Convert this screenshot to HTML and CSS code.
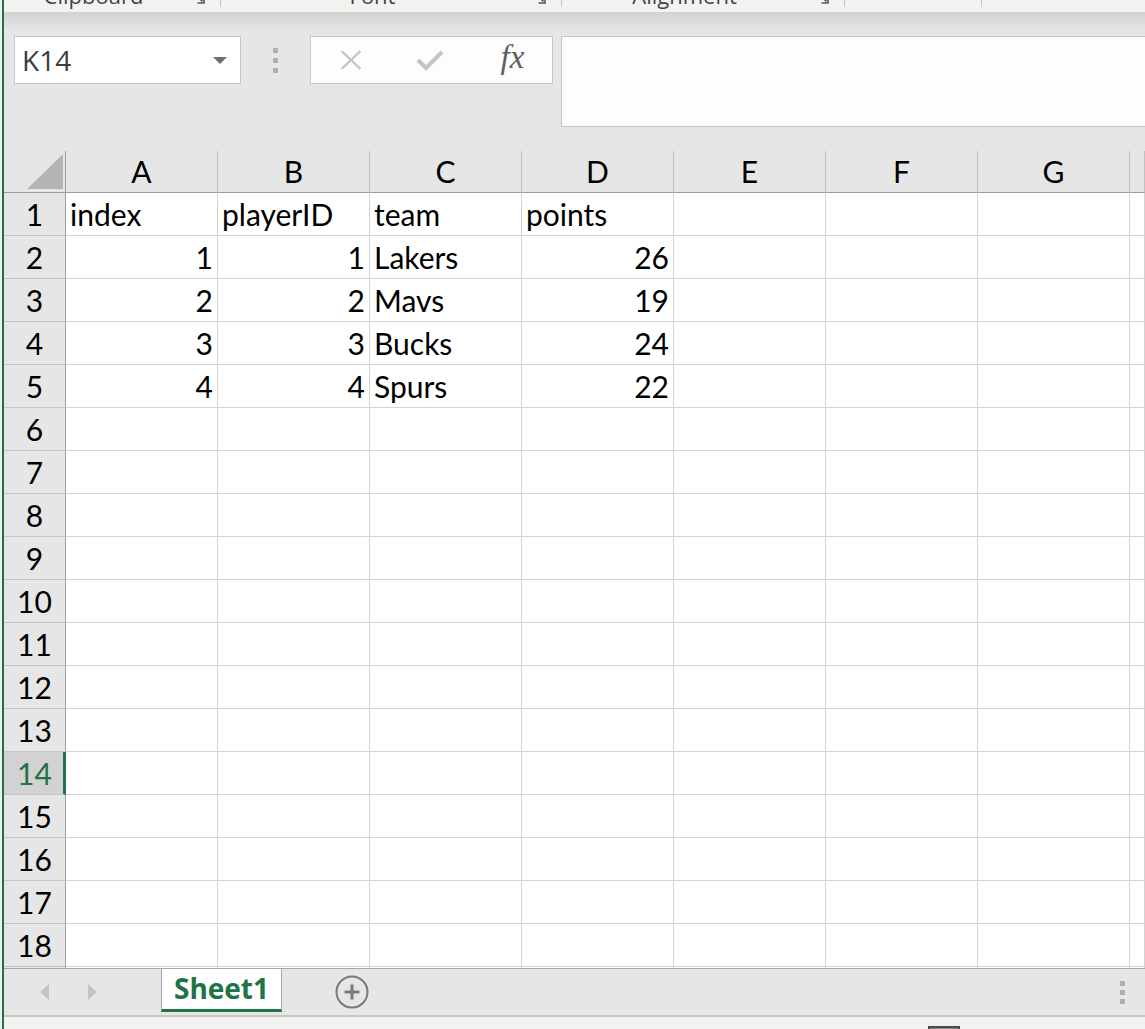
FILE: index.html
```html
<!DOCTYPE html>
<html lang="en">
<head>
<meta charset="utf-8">
<title>Excel - Sheet1</title>
<link rel="stylesheet" href="styles.css">
</head>
<body>
<div class="app">
  <div class="edge"></div>
  <div class="main">
    <div class="ribbon">
      <div class="rrow">
        <div class="rgroup g-clip"><span class="rlabel">Clipboard</span><span class="launch"><svg width="12" height="12" viewBox="0 0 12 12"><path d="M1 1 L8.5 8.5 M3.5 10 H10 V3.5" fill="none" stroke="#555" stroke-width="1.6"/></svg></span></div>
        <div class="rgroup g-font"><span class="rlabel">Font</span><span class="launch"><svg width="12" height="12" viewBox="0 0 12 12"><path d="M1 1 L8.5 8.5 M3.5 10 H10 V3.5" fill="none" stroke="#555" stroke-width="1.6"/></svg></span></div>
        <div class="rgroup g-align"><span class="rlabel">Alignment</span><span class="launch"><svg width="12" height="12" viewBox="0 0 12 12"><path d="M1 1 L8.5 8.5 M3.5 10 H10 V3.5" fill="none" stroke="#555" stroke-width="1.6"/></svg></span></div>
        <div class="rgroup g-num"></div>
      </div>
    </div>

    <div class="fbar">
      <div class="namebox"><span class="nb-text">K14</span><span class="nb-caret"></span></div>
      <div class="grip"><i></i><i></i><i></i></div>
      <div class="fbtns">
        <span class="fb"><svg width="22" height="20" viewBox="0 0 22 20"><path d="M1.5 1 L20.5 19 M20.5 1 L1.5 19" stroke="#c4c4c4" stroke-width="2.4" fill="none"/></svg></span>
        <span class="fb"><svg width="28" height="22" viewBox="0 0 28 22"><path d="M2 11 L10 19 L26 3" stroke="#c4c4c4" stroke-width="4.2" fill="none"/></svg></span>
        <span class="fb fx">fx</span>
      </div>
      <div class="finput"></div>
    </div>

    <div class="sheet">
      <div class="row head">
        <div class="corner"><svg width="36" height="35" viewBox="0 0 36 35"><path d="M0 35 L36 0 L36 35 Z" fill="#b4b4b4"/></svg></div>
        <div class="ch">A</div><div class="ch">B</div><div class="ch">C</div><div class="ch">D</div><div class="ch">E</div><div class="ch">F</div><div class="ch">G</div><div class="ch"></div>
      </div>
      <div class="row"><div class="rh">1</div><div class="c">index</div><div class="c">playerID</div><div class="c">team</div><div class="c">points</div><div class="c"></div><div class="c"></div><div class="c"></div><div class="c"></div></div>
      <div class="row"><div class="rh">2</div><div class="c n">1</div><div class="c n">1</div><div class="c">Lakers</div><div class="c n">26</div><div class="c"></div><div class="c"></div><div class="c"></div><div class="c"></div></div>
      <div class="row"><div class="rh">3</div><div class="c n">2</div><div class="c n">2</div><div class="c">Mavs</div><div class="c n">19</div><div class="c"></div><div class="c"></div><div class="c"></div><div class="c"></div></div>
      <div class="row"><div class="rh">4</div><div class="c n">3</div><div class="c n">3</div><div class="c">Bucks</div><div class="c n">24</div><div class="c"></div><div class="c"></div><div class="c"></div><div class="c"></div></div>
      <div class="row"><div class="rh">5</div><div class="c n">4</div><div class="c n">4</div><div class="c">Spurs</div><div class="c n">22</div><div class="c"></div><div class="c"></div><div class="c"></div><div class="c"></div></div>
      <div class="row"><div class="rh">6</div><div class="c"></div><div class="c"></div><div class="c"></div><div class="c"></div><div class="c"></div><div class="c"></div><div class="c"></div><div class="c"></div></div>
      <div class="row"><div class="rh">7</div><div class="c"></div><div class="c"></div><div class="c"></div><div class="c"></div><div class="c"></div><div class="c"></div><div class="c"></div><div class="c"></div></div>
      <div class="row"><div class="rh">8</div><div class="c"></div><div class="c"></div><div class="c"></div><div class="c"></div><div class="c"></div><div class="c"></div><div class="c"></div><div class="c"></div></div>
      <div class="row"><div class="rh">9</div><div class="c"></div><div class="c"></div><div class="c"></div><div class="c"></div><div class="c"></div><div class="c"></div><div class="c"></div><div class="c"></div></div>
      <div class="row"><div class="rh">10</div><div class="c"></div><div class="c"></div><div class="c"></div><div class="c"></div><div class="c"></div><div class="c"></div><div class="c"></div><div class="c"></div></div>
      <div class="row"><div class="rh">11</div><div class="c"></div><div class="c"></div><div class="c"></div><div class="c"></div><div class="c"></div><div class="c"></div><div class="c"></div><div class="c"></div></div>
      <div class="row"><div class="rh">12</div><div class="c"></div><div class="c"></div><div class="c"></div><div class="c"></div><div class="c"></div><div class="c"></div><div class="c"></div><div class="c"></div></div>
      <div class="row"><div class="rh">13</div><div class="c"></div><div class="c"></div><div class="c"></div><div class="c"></div><div class="c"></div><div class="c"></div><div class="c"></div><div class="c"></div></div>
      <div class="row"><div class="rh sel">14</div><div class="c"></div><div class="c"></div><div class="c"></div><div class="c"></div><div class="c"></div><div class="c"></div><div class="c"></div><div class="c"></div></div>
      <div class="row"><div class="rh">15</div><div class="c"></div><div class="c"></div><div class="c"></div><div class="c"></div><div class="c"></div><div class="c"></div><div class="c"></div><div class="c"></div></div>
      <div class="row"><div class="rh">16</div><div class="c"></div><div class="c"></div><div class="c"></div><div class="c"></div><div class="c"></div><div class="c"></div><div class="c"></div><div class="c"></div></div>
      <div class="row"><div class="rh">17</div><div class="c"></div><div class="c"></div><div class="c"></div><div class="c"></div><div class="c"></div><div class="c"></div><div class="c"></div><div class="c"></div></div>
      <div class="row"><div class="rh">18</div><div class="c"></div><div class="c"></div><div class="c"></div><div class="c"></div><div class="c"></div><div class="c"></div><div class="c"></div><div class="c"></div></div>
      <div class="row"><div class="rh">19</div><div class="c"></div><div class="c"></div><div class="c"></div><div class="c"></div><div class="c"></div><div class="c"></div><div class="c"></div><div class="c"></div></div>
    </div>

    <div class="tabs">
      <div class="nav">
        <span class="arr arr-l"></span>
        <span class="arr arr-r"></span>
      </div>
      <div class="tab">Sheet1</div>
      <div class="addsheet"><svg width="34" height="34" viewBox="0 0 34 34"><circle cx="17" cy="17" r="15.5" fill="none" stroke="#7a7a7a" stroke-width="2"/><path d="M17 9.5 V24.5 M9.5 17 H24.5" stroke="#7a7a7a" stroke-width="3"/></svg></div>
      <div class="vdots"><i></i><i></i><i></i></div>
    </div>

    <div class="status"><span class="sbox"></span></div>
  </div>
</div>
</body>
</html>
```

FILE: styles.css
```css
html, body {
  margin: 0;
  padding: 0;
}
body {
  width: 1145px;
  height: 1029px;
  overflow: hidden;
  background: #e6e6e6;
  font-family: "Open Sans", "Noto Sans", sans-serif;
}
.app {
  display: flex;
  height: 1029px;
}
.edge {
  width: 4px;
  flex: none;
  background: linear-gradient(90deg, #efefef 0, #efefef 2px, #217346 2px, #217346 4px);
}
.main {
  flex: 1;
  display: flex;
  flex-direction: column;
  min-width: 0;
}

/* Ribbon (cut off at the top of the window) */
.ribbon {
  height: 12px;
  flex: none;
  background: #f3f2f1;
  overflow: hidden;
}
.rrow {
  display: flex;
  margin-top: -16px;
}
.rgroup {
  display: flex;
  height: 23px;
  box-sizing: border-box;
  border-right: 1px solid #c8c6c4;
}
.g-clip { width: 217px; }
.g-font { width: 341px; }
.g-align { width: 283px; }
.g-num { width: 137px; }
.rlabel {
  flex: 1;
  text-align: center;
  font-size: 22px;
  line-height: 22px;
  color: #444;
}
.launch {
  width: 37px;
  flex: none;
  padding-left: 11px;
  box-sizing: border-box;
  padding-top: 9px;
}
.launch svg { display: block; }

/* Formula bar */
.fbar {
  height: 139px;
  flex: none;
  box-sizing: border-box;
  padding: 24px 0 0 10px;
  display: flex;
  align-items: flex-start;
  background: linear-gradient(#d2d2d2 0, #e6e6e6 18px, #e6e6e6 100%);
}
.namebox {
  width: 227px;
  height: 48px;
  box-sizing: border-box;
  border: 1px solid #c6c6c6;
  background: #fff;
  display: flex;
  align-items: center;
  justify-content: space-between;
  padding: 0 13px 0 7px;
}
.nb-text {
  font-size: 28px;
  line-height: 1;
  color: #3c3c3c;
}
.nb-caret {
  width: 0;
  height: 0;
  border-left: 7px solid transparent;
  border-right: 7px solid transparent;
  border-top: 7px solid #6f6f6f;
}
.grip {
  width: 69px;
  height: 48px;
  display: flex;
  flex-direction: column;
  align-items: center;
  justify-content: center;
  gap: 5px;
}
.grip i, .vdots i {
  display: block;
  width: 5px;
  height: 5px;
  background: #b0b0b0;
}
.fbtns {
  width: 243px;
  height: 48px;
  box-sizing: border-box;
  border: 1px solid #c6c6c6;
  background: #fdfdfd;
  display: flex;
}
.fb {
  flex: 1;
  display: flex;
  align-items: center;
  justify-content: center;
}
.fb svg { display: block; }
.fx {
  font-family: "Liberation Serif", "DejaVu Serif", serif;
  font-style: italic;
  font-size: 33px;
  color: #5f5f5f;
  padding-bottom: 6px;
  padding-left: 4px;
}
.finput {
  flex: 1;
  height: 91px;
  margin-left: 8px;
  box-sizing: border-box;
  border: 1px solid #c6c6c6;
  border-right: none;
  background: #fdfdfd;
}

/* Sheet grid */
.sheet {
  height: 817px;
  flex: none;
  overflow: hidden;
  background: #fff;
}
.row {
  display: grid;
  grid-template-columns: 62px repeat(7, 152px) 1fr;
  height: 43px;
}
.row.head { height: 42px; }
.row > div {
  box-sizing: border-box;
  display: flex;
  align-items: flex-end;
  font-family: "Lato", "Carlito", sans-serif;
  font-size: 30px;
  line-height: 1;
  color: #000;
  padding: 0 4px 6px;
  white-space: nowrap;
  overflow: hidden;
}
.c {
  border-right: 1px solid #d4d4d4;
  border-bottom: 1px solid #d4d4d4;
  background: #fff;
}
.c.n { justify-content: flex-end; }
.ch {
  background: #e6e6e6;
  border-right: 1px solid #c0c0c0;
  border-bottom: 1px solid #9e9e9e;
  justify-content: center;
}
.row > .corner {
  background: #e6e6e6;
  border-right: 1px solid #9e9e9e;
  border-bottom: 1px solid #9e9e9e;
  justify-content: flex-end;
  padding: 0 2px 3px 0;
}
.corner svg { display: block; }
.rh {
  background: #e6e6e6;
  border-right: 1px solid #9e9e9e;
  border-bottom: 1px solid #c6c6c6;
  justify-content: center;
}
.row > .rh.sel {
  background: #d2d2d2;
  color: #217346;
  border-right: 3px solid #217346;
  padding-left: 6px;
}

/* Sheet tabs */
.tabs {
  height: 47px;
  flex: none;
  box-sizing: border-box;
  border-top: 1px solid #a6a6a6;
  background: #e6e6e6;
  display: flex;
  align-items: flex-start;
}
.nav {
  width: 157px;
  height: 45px;
  display: flex;
  align-items: center;
}
.arr {
  width: 0;
  height: 0;
  border-top: 8px solid transparent;
  border-bottom: 8px solid transparent;
}
.arr-l {
  margin-left: 36px;
  border-right: 9px solid #c4c4c4;
}
.arr-r {
  margin-left: 39px;
  border-left: 9px solid #c4c4c4;
}
.tab {
  width: 121px;
  height: 43px;
  box-sizing: border-box;
  background: #fff;
  border-left: 1px solid #a6a6a6;
  border-right: 1px solid #a6a6a6;
  border-bottom: 3px solid #217346;
  display: flex;
  align-items: center;
  justify-content: center;
  font-family: "Open Sans", sans-serif;
  font-weight: 700;
  font-size: 28px;
  line-height: 1;
  color: #217346;
  padding-bottom: 2px;
}
.addsheet {
  margin-left: 53px;
  margin-top: 6px;
}
.addsheet svg { display: block; }
.vdots {
  margin-left: auto;
  margin-right: 20px;
  margin-top: 12px;
  display: flex;
  flex-direction: column;
  gap: 4px;
}

/* Status bar */
.status {
  flex: 1;
  box-sizing: border-box;
  border-top: 2px solid #c8c6c4;
  background: #f3f2f1;
  padding-left: 924px;
  padding-top: 9px;
}
.sbox {
  display: block;
  width: 32px;
  height: 8px;
  box-sizing: border-box;
  border: 2px solid #4a4a4a;
  background: #8a8a8a;
}
```
